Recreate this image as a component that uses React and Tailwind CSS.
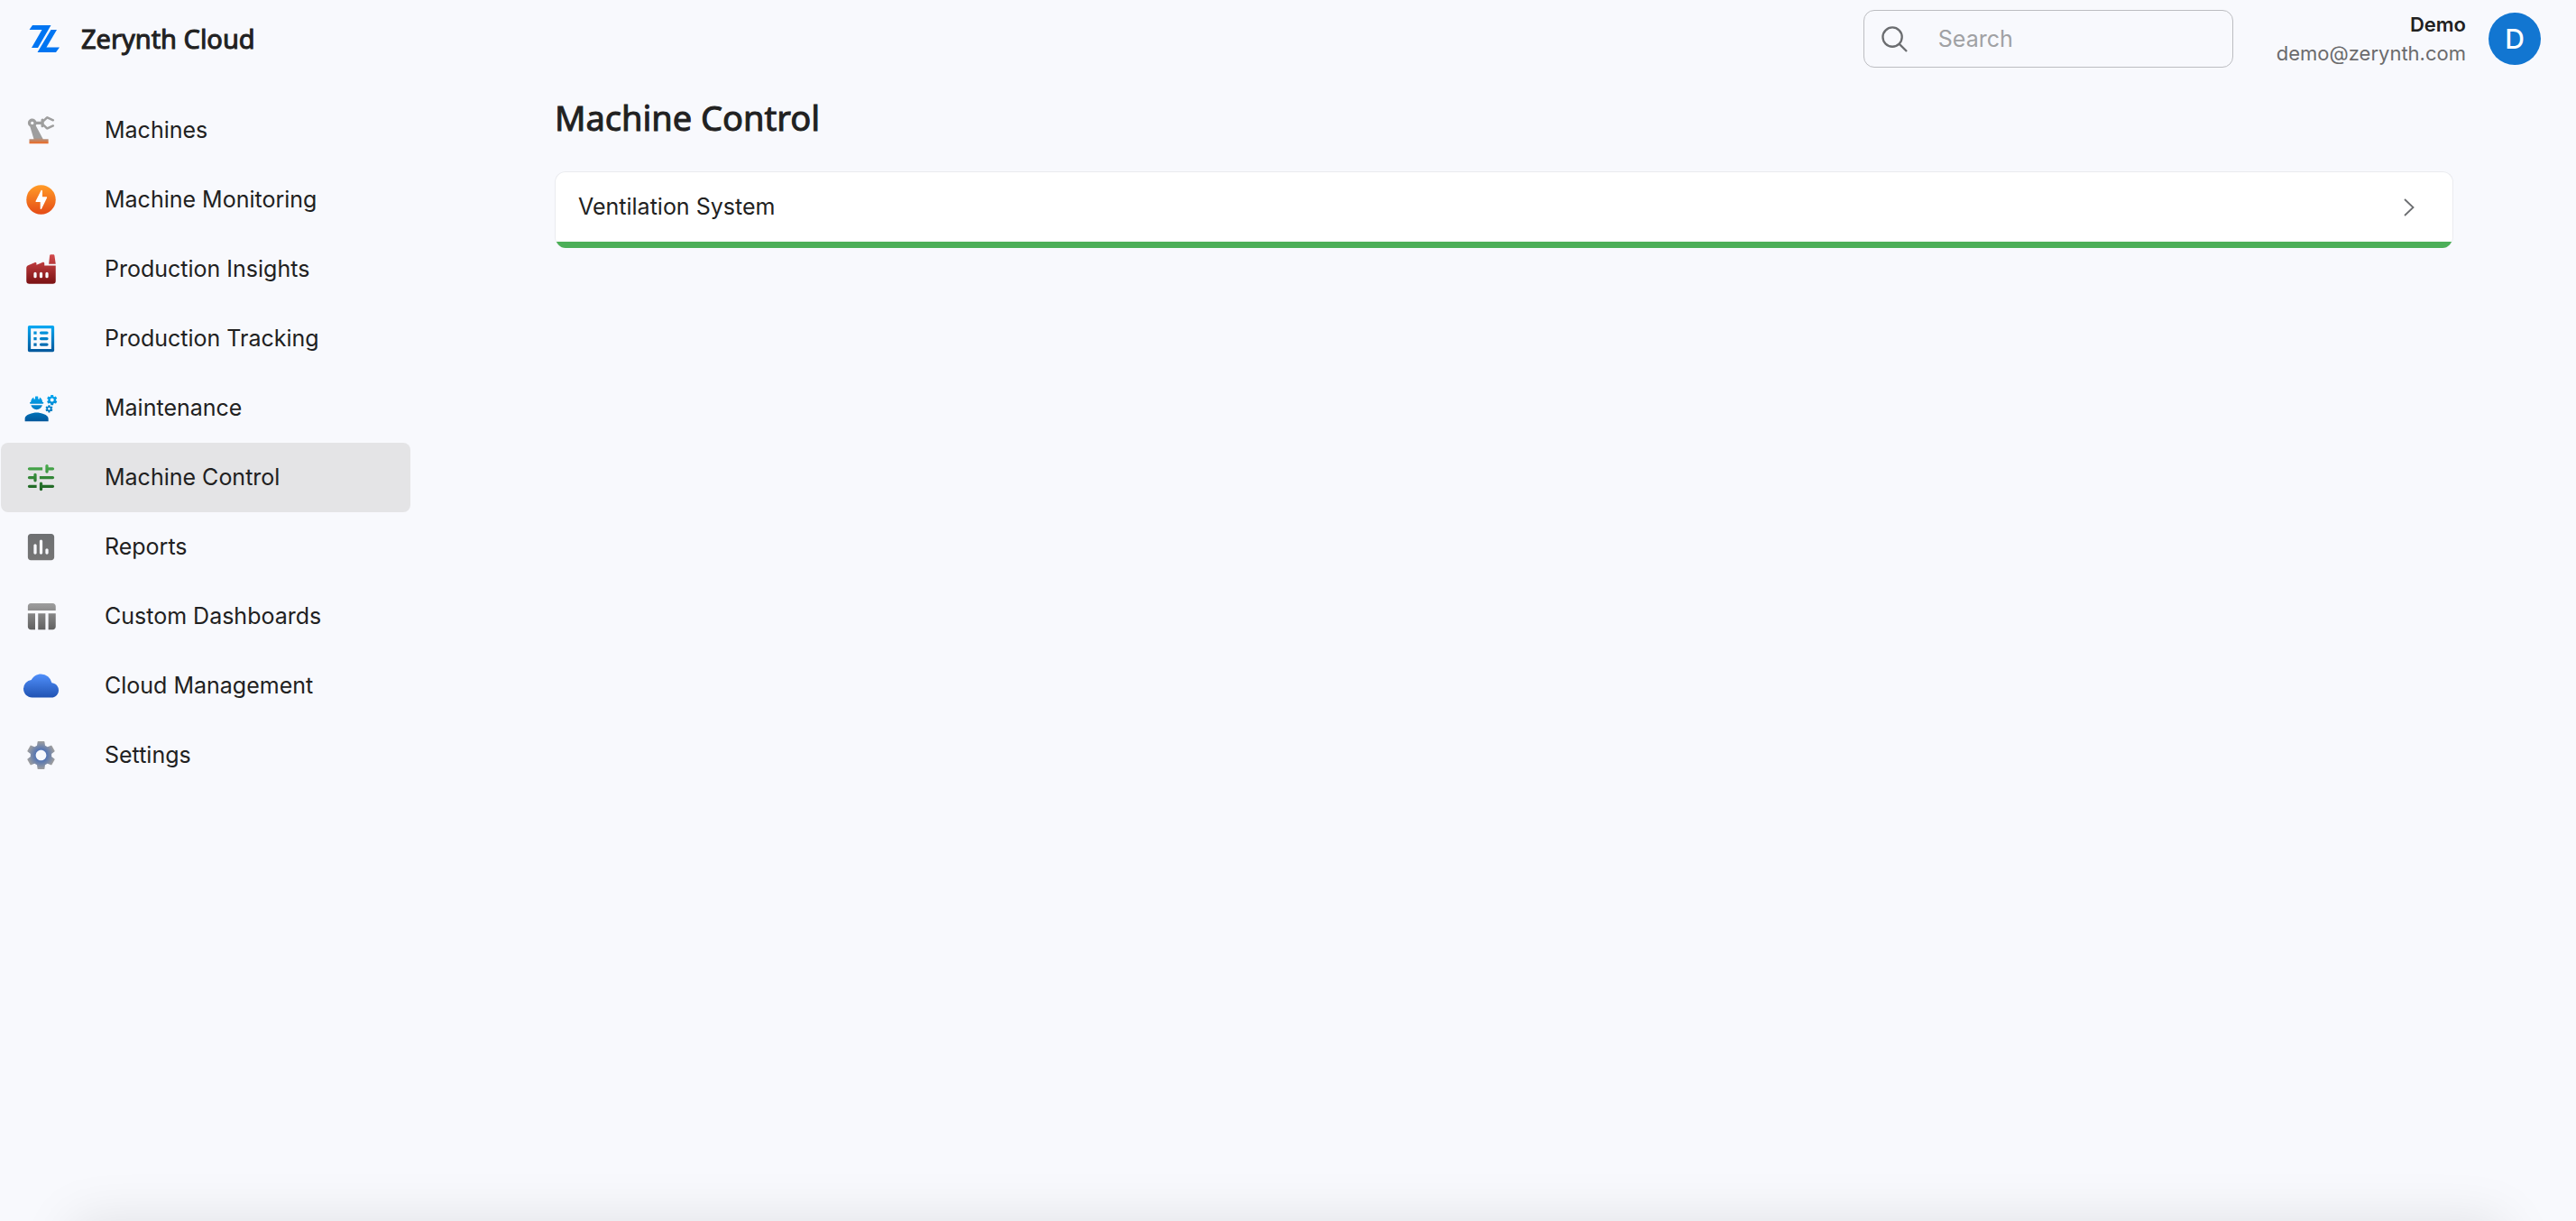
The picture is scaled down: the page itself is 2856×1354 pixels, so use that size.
import React from "react";
import {MdCloud, MdEngineering, MdSettings, MdPrecisionManufacturing} from "react-icons/md";

const Gradient = ({id, from, to}) => (
    <linearGradient id={id} gradientUnits="userSpaceOnUse" x1="0" y1="3" x2="0" y2="21">
        <stop offset="0" stopColor={from}/>
        <stop offset="1" stopColor={to}/>
    </linearGradient>
);

// Shared paint servers for the menu icons
const IconGradients = () => (
    <svg className="absolute h-0 w-0" aria-hidden="true">
        <defs>
            <linearGradient id="machines" gradientUnits="userSpaceOnUse" x1="0" y1="2" x2="0" y2="22">
                <stop offset="0.75" stopColor="#9e9e9e"/>
                <stop offset="0.95" stopColor="#ee6a22"/>
            </linearGradient>
            <Gradient id="monitoring" from="#ff9826" to="#e64f17"/>
            <Gradient id="insights" from="#d0484a" to="#7f1416"/>
            <Gradient id="tracking" from="#03a9f4" to="#01579b"/>
            <Gradient id="control" from="#4caf50" to="#1b5e20"/>
            <Gradient id="reports" from="#6e7072" to="#757575"/>
            <Gradient id="dashboards" from="#9e9e9e" to="#616161"/>
            <Gradient id="cloud" from="#5393ff" to="#1d4fae"/>
            <radialGradient id="settings" gradientUnits="userSpaceOnUse" cx="12" cy="12" r="10">
                <stop offset="0.3" stopColor="#4a6fb5"/>
                <stop offset="0.95" stopColor="#9e9e9e"/>
            </radialGradient>
        </defs>
    </svg>
);

const iconClass = "h-[39px] w-[39px] shrink-0";

const Icon = ({fill, children}) => (
    <svg className={iconClass} viewBox="0 0 24 24" fill={fill} aria-hidden="true">
        {children}
    </svg>
);

const items = [
    {label: "Machines", icon: <MdPrecisionManufacturing className={iconClass} fill="url(#machines)"/>},
    {
        label: "Machine Monitoring",
        icon: (
            <Icon fill="url(#monitoring)">
                <circle cx="12" cy="12" r="10"/>
                <path fill="#fff" d="M12.9 6v4h2.6c.5 0 .7.4.5.8l-3.6 7.4c-.2.5-.9.4-.9-.2v-4.500H8.800c-.4 0-.6-.4-.4-.8L12 5.700c.2-.5.9-.3.9.3z"/>
            </Icon>
        ),
    },
    {
        label: "Production Insights",
        icon: (
            <Icon fill="url(#insights)">
                <path d="M18.7 2h1.700c.4 0 .7.3.8.7l.8 5.800h-4.700l.6-5.800c.1-.4.4-.7.8-.7z"/>
                <path fillRule="evenodd" d="M22 9.500V20a2 2 0 0 1-2 2H4a2 2 0 0 1-2-2v-8.800c0-.8.4-1.500 1.200-1.800l4.700-2c.5-.2 1 .1 1 .6v1l4-1.600c.7-.3 1.400.1 1.400.7v1.400zM8 14a1 1 0 0 0-1 1v2a1 1 0 0 0 2 0v-2a1 1 0 0 0-1-1zm4 0a1 1 0 0 0-1 1v2a1 1 0 0 0 2 0v-2a1 1 0 0 0-1-1zm4 0a1 1 0 0 0-1 1v2a1 1 0 0 0 2 0v-2a1 1 0 0 0-1-1z"/>
            </Icon>
        ),
    },
    {
        label: "Production Tracking",
        icon: (
            <Icon fill="url(#tracking)">
                <path fillRule="evenodd" d="M4 3h16a1 1 0 0 1 1 1v16a1 1 0 0 1-1 1H4a1 1 0 0 1-1-1V4a1 1 0 0 1 1-1zm1 2v14h14V5z"/>
                <path d="M7 7h2v2H7zM7 11h2v2H7zM7 15h2v2H7zM12 7h4a1 1 0 0 1 0 2h-4a1 1 0 0 1 0-2zM12 11h4a1 1 0 0 1 0 2h-4a1 1 0 0 1 0-2zM12 15h4a1 1 0 0 1 0 2h-4a1 1 0 0 1 0-2z"/>
            </Icon>
        ),
    },
    {label: "Maintenance", icon: <MdEngineering className={iconClass} fill="url(#tracking)"/>},
    {
        label: "Machine Control",
        active: true,
        icon: (
            <Icon fill="url(#control)">
                <path d="M3 18c0 .55.45 1 1 1h5v-2H4c-.55 0-1 .45-1 1zM3 6c0 .55.45 1 1 1h9V5H4c-.55 0-1 .45-1 1zm10 14v-1h7c.55 0 1-.45 1-1s-.45-1-1-1h-7v-1c0-.55-.45-1-1-1s-1 .45-1 1v4c0 .55.45 1 1 1s1-.45 1-1zM7 10v1H4c-.55 0-1 .45-1 1s.45 1 1 1h3v1c0 .55.45 1 1 1s1-.45 1-1v-4c0-.55-.45-1-1-1s-1 .45-1 1zm14 2c0-.55-.45-1-1-1h-9v2h9c.55 0 1-.45 1-1zm-5-3c.55 0 1-.45 1-1V7h3c.55 0 1-.45 1-1s-.45-1-1-1h-3V4c0-.55-.45-1-1-1s-1 .45-1 1v4c0 .55.45 1 1 1z"/>
            </Icon>
        ),
    },
    {
        label: "Reports",
        icon: (
            <Icon fill="url(#reports)">
                <path d="M19 3H5c-1.1 0-2 .9-2 2v14c0 1.1.9 2 2 2h14c1.1 0 2-.9 2-2V5c0-1.1-.9-2-2-2zM8 17c-.55 0-1-.45-1-1v-5c0-.55.45-1 1-1s1 .45 1 1v5c0 .55-.45 1-1 1zm4 0c-.55 0-1-.45-1-1V8c0-.55.45-1 1-1s1 .45 1 1v8c0 .55-.45 1-1 1zm4 0c-.55 0-1-.45-1-1v-2c0-.55.45-1 1-1s1 .45 1 1v2c0 .55-.45 1-1 1z"/>
            </Icon>
        ),
    },
    {
        label: "Custom Dashboards",
        icon: (
            <Icon fill="url(#dashboards)">
                <path d="M10 10h5v11h-5V10zM17 21h3c1.1 0 2-.9 2-2v-9h-5v11zm3-18H5c-1.1 0-2 .9-2 2v3h19V5c0-1.1-.9-2-2-2zM3 19c0 1.1.9 2 2 2h3V10H3v9z"/>
            </Icon>
        ),
    },
    {label: "Cloud Management", icon: <MdCloud className={iconClass} fill="url(#cloud)"/>},
    {label: "Settings", icon: <MdSettings className={iconClass} fill="url(#settings)"/>},
];

const Header = () => (
    <header className="flex h-[86px] items-center pl-8 pr-[39px]">
        <a href="#" className="flex items-center">
            <svg className="h-[30px] w-[34px]" viewBox="0 0 34 30" fill="#0075f2" aria-hidden="true">
                <path d="M4 0h20.500L10 25H3L14.500 5H.5z"/>
                <path d="M24.500 5H31L19.500 24.500H34L30 30H9.500z"/>
            </svg>
            <span className="ml-6 font-['Noto_Sans'] text-[29px] leading-9 [-webkit-text-stroke:1px]">Zerynth Cloud</span>
        </a>
        <div className="ml-auto flex items-center">
            <label className="flex h-16 w-[410px] items-center rounded-xl border border-[#bcbdc1] pl-[19px]">
                <svg className="h-[29px] w-[29px]" viewBox="0 0 30 30" fill="none" stroke="#6b6d70" strokeWidth="2.4" aria-hidden="true">
                    <circle cx="12.5" cy="12.5" r="11"/>
                    <path d="M20 20l9 9"/>
                </svg>
                <input
                    type="search"
                    aria-label="Search"
                    placeholder="Search"
                    className="ml-[34px] w-72 bg-transparent pt-0.5 text-[25px] outline-none placeholder:text-[#a0a1a4]"
                />
            </label>
            <div className="ml-12 text-right">
                <p className="text-[22px] font-semibold leading-8">Demo</p>
                <p className="text-[22px] leading-8 text-[#6b6b6d]">demo@zerynth.com</p>
            </div>
            <button type="button" className="ml-[25px] h-[58px] w-[58px] rounded-full bg-[#1276d1] text-3xl font-medium text-white">
                D
            </button>
        </div>
    </header>
);

const Sidebar = () => (
    <nav className="w-[455px] shrink-0 pl-px pt-5">
        {items.map((item) => (
            <a
                key={item.label}
                href="#"
                className={`flex h-[77px] items-center rounded-lg pl-[25px] text-[25px] ${item.active ? "bg-[#e4e4e6]" : ""}`}
            >
                {item.icon}
                <span className="ml-[51px]">{item.label}</span>
            </a>
        ))}
    </nav>
);

const App = () => {
    return (
        <div className="relative flex min-h-screen flex-col overflow-hidden bg-[#f8f9fd] font-[Inter] text-[#212121]">
            <IconGradients/>
            <Header/>
            <div className="flex grow">
                <Sidebar/>
                <main className="grow pl-40 pr-[136px] pt-5">
                    <h1 className="font-['Noto_Sans'] text-[38px] leading-12 [-webkit-text-stroke:1px]">Machine Control</h1>
                    <a
                        href="#"
                        className="mt-9 block overflow-hidden rounded-xl border border-b-0 border-[#eaebef] bg-white text-[25px]"
                    >
                        <span className="flex h-[77px] items-center justify-between pl-[25px] pr-[42px]">
                            Ventilation System
                            <svg className="h-5 w-3" viewBox="0 0 12 20" fill="none" stroke="#6b6d70" strokeWidth="1.8" aria-hidden="true">
                                <path d="M1 1l9.500 9L1 19"/>
                            </svg>
                        </span>
                        <span className="block h-[7px] bg-[#4caf58]"/>
                    </a>
                </main>
            </div>
            {/* soft shade rising from the bottom edge */}
            <div className="absolute inset-x-20 top-full h-20 shadow-[0_0_60px_rgba(0,0,0,0.1)]"/>
        </div>
    );
};

export default App;
